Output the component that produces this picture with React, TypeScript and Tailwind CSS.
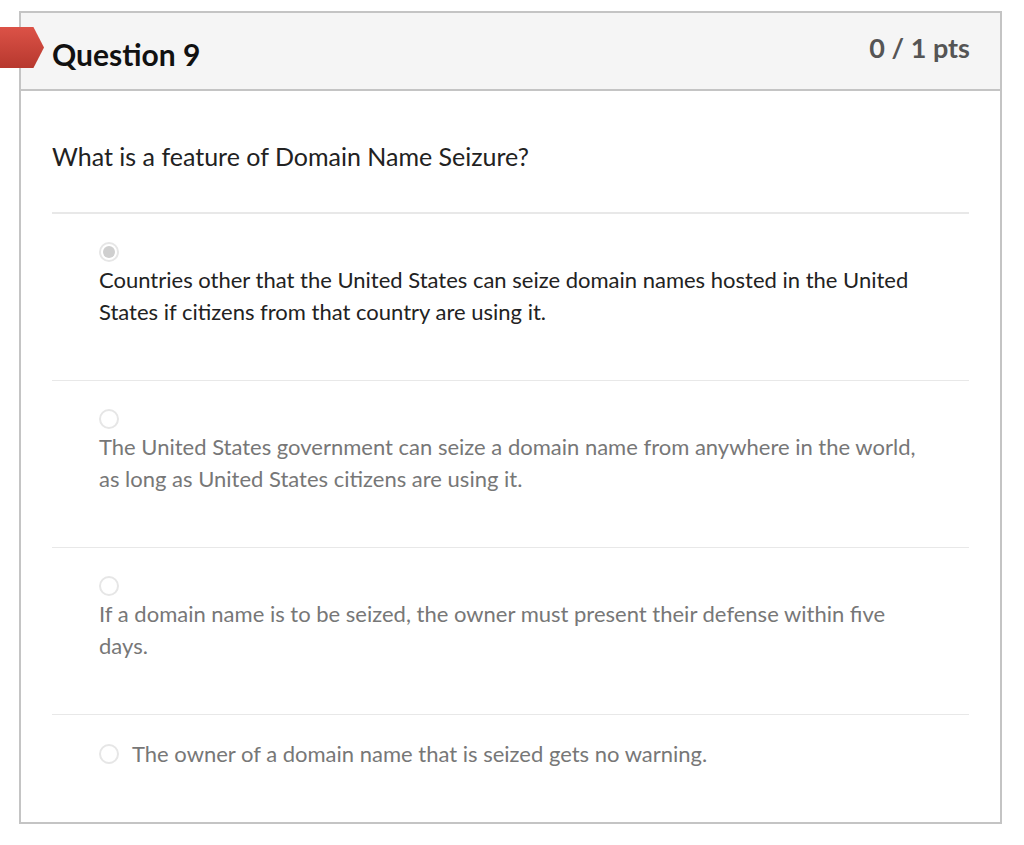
import React from 'react';

type Answer = { text: string; selected?: boolean; inline?: boolean };

const ANSWERS: Answer[] = [
  {
    text: 'Countries other that the United States can seize domain names hosted in the United States if citizens from that country are using it.',
    selected: true,
  },
  {
    text: 'The United States government can seize a domain name from anywhere in the world, as long as United States citizens are using it.',
  },
  {
    text: 'If a domain name is to be seized, the owner must present their defense within five days.',
  },
  {
    text: 'The owner of a domain name that is seized gets no warning.',
    inline: true,
  },
];

const Radio: React.FC<{ selected?: boolean }> = ({ selected }) => (
  <span className="flex h-[20px] w-[20px] shrink-0 items-center justify-center rounded-full border-2 border-[#e6e6e6] bg-white">
    {selected && <span className="h-[12px] w-[12px] rounded-full bg-[#cfcfcf]" />}
  </span>
);

const AnswerRow: React.FC<{ answer: Answer; last: boolean }> = ({ answer, last }) => {
  const color = answer.selected ? 'text-[#222]' : 'text-[#777]';
  if (answer.inline) {
    return (
      <div className="flex items-center gap-[13px] pl-[47px] pt-[28px] pb-[57px]">
        <Radio selected={answer.selected} />
        <span className={`text-[22px] leading-[22px] ${color}`}>{answer.text}</span>
      </div>
    );
  }
  return (
    <div className={`pl-[47px] pr-[40px] pt-[28px] pb-[52px] ${last ? '' : 'border-b border-[#e8e8e8]'}`}>
      <Radio selected={answer.selected} />
      <p className={`mt-[2px] text-[22px] leading-[32px] ${color}`}>{answer.text}</p>
    </div>
  );
};

export default function App() {
  return (
    <div className="relative min-h-[845px] bg-white pt-[11px] pl-[19px] pr-[22px]" style={{ fontFamily: 'Lato, "Open Sans", sans-serif' }}>
      {/* red flag marking an incorrect answer */}
      <div
        className="absolute left-0 top-[27px] h-[41px] w-[44px] bg-gradient-to-b from-[#dc5247] to-[#b7382e]"
        style={{ clipPath: 'polygon(0 0, 76% 0, 100% 50%, 76% 100%, 0 100%)' }}
      />
      <div className="border-2 border-[#c4c4c4]">
        <div className="flex h-[78px] items-start justify-between border-b-2 border-[#c4c4c4] bg-[#f5f5f5] pl-[31px] pr-[30px]">
          <h2 className="pt-[23px] text-[30px] font-bold leading-[36px] text-[#111]">Question 9</h2>
          <span className="pt-[19px] text-[27px] font-bold leading-[32px] text-[#555]">0 / 1 pts</span>
        </div>
        <div className="px-[31px]">
          <p className="border-b-2 border-[#e8e8e8] pt-[49px] pb-[40px] text-[25px] leading-[32px] text-[#222]">
            What is a feature of Domain Name Seizure?
          </p>
          {ANSWERS.map((a, i) => (
            <AnswerRow key={i} answer={a} last={i === ANSWERS.length - 1} />
          ))}
        </div>
      </div>
    </div>
  );
}
